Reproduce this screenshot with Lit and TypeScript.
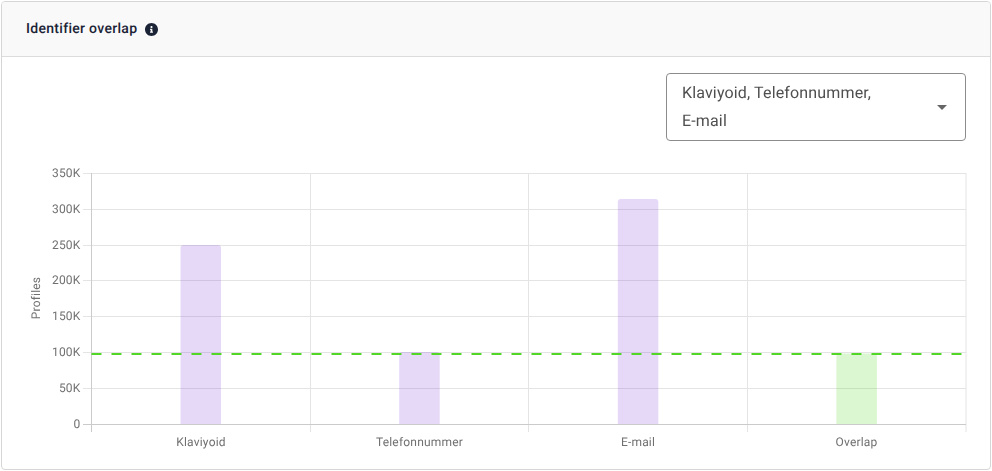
import { LitElement, html, css, svg } from "lit";
import { customElement } from "lit/decorators.js";

const GRID_Y = [173.5, 209.5, 245.5, 280.5, 316.5, 352.5, 388.5, 424.5];
const LABELS_Y = ["350K", "300K", "250K", "200K", "150K", "100K", "50K", "0"];
const GRID_X = [91.5, 310.5, 528.5, 747.5, 966];
const BARS = [
  { name: "Klaviyoid", x: 180.5, top: 245, cx: 201, fill: "rgba(128,64,220,.2)" },
  { name: "Telefonnummer", x: 399.2, top: 352, cx: 419.5, fill: "rgba(128,64,220,.2)" },
  { name: "E-mail", x: 617.8, top: 199, cx: 638, fill: "rgba(128,64,220,.2)" },
  { name: "Overlap", x: 836.4, top: 353.5, cx: 856.5, fill: "rgba(82,215,38,.21)" },
];

@customElement("app-root")
export class AppRoot extends LitElement {
  static styles = css`
    :host { display: block; padding: 1px; font-family: Roboto, "Liberation Sans", sans-serif; }
    .card { width: 990px; height: 469px; box-sizing: border-box; border: 1px solid #d6d6d6; border-radius: 4px; background: #fff; overflow: hidden; }
    .head { height: 55px; box-sizing: border-box; border-bottom: 1px solid #dcdcdc; background: #f9f9f9; display: flex; align-items: center; gap: 8px; padding: 0 0 0 24px; }
    .title { font-size: 14px; font-weight: 500; color: #1b2336; letter-spacing: 0.3px; text-rendering: geometricPrecision; }
    .info { width: 13px; height: 13px; fill: #1b2336; display: block; }
    .controls { display: flex; justify-content: flex-end; padding: 16px 24px 0 0; }
    .select { width: 300px; height: 68px; box-sizing: border-box; border: 1px solid #8c8c8c; border-radius: 4px; display: flex; align-items: center; justify-content: space-between; padding: 0 18px 0 15px; }
    .value { font-size: 16px; line-height: 28px; color: #4f4f4f; width: 200px; letter-spacing: 0.15px; font-weight: 400; text-rendering: geometricPrecision; will-change: transform; }
    .caret { width: 0; height: 0; border-left: 5.5px solid transparent; border-right: 5.5px solid transparent; border-top: 5px solid #666; }
    .chart { display: block; margin-top: 9px; will-change: transform; }
    .chart text { font-family: Roboto, "Liberation Sans", sans-serif; font-size: 12px; fill: #707070; text-rendering: geometricPrecision; letter-spacing: 0.2px; }
    .grid { stroke: #e4e4e4; stroke-width: 1; }
    .axis { stroke: #cbcbcb; stroke-width: 1; }
    .avg { stroke: #52d726; stroke-width: 2; stroke-dasharray: 10 10; }
  `;

  render() {
    return html`<div class="card">
      <div class="head">
        <span class="title">Identifier overlap</span>
        <svg class="info" viewBox="8 8 496 496"><path d="M256 8C119.043 8 8 119.083 8 256c0 136.997 111.043 248 248 248s248-111.003 248-248C504 119.083 392.957 8 256 8zm0 110c23.196 0 42 18.804 42 42s-18.804 42-42 42-42-18.804-42-42 18.804-42 42-42zm56 254c0 6.627-5.373 12-12 12h-88c-6.627 0-12-5.373-12-12v-24c0-6.627 5.373-12 12-12h12v-64h-12c-6.627 0-12-5.373-12-12v-24c0-6.627 5.373-12 12-12h64c6.627 0 12 5.373 12 12v100h12c6.627 0 12 5.373 12 12v24z"/></svg>
      </div>
      <div class="controls">
        <div class="select">
          <div class="value">Klaviyoid, Telefonnummer, E-mail</div>
          <span class="caret"></span>
        </div>
      </div>
      <svg class="chart" width="988" height="320" viewBox="2 150 988 320">
        ${GRID_Y.slice(0, 7).map((y) => svg`<line class="grid" x1="83" x2="966" y1=${y} y2=${y}></line>`)}
        ${GRID_X.slice(1).map((x) => svg`<line class="grid" x1=${x} x2=${x} y1="173" y2="432"></line>`)}
        ${BARS.map((b) => svg`<path fill=${b.fill} d="M${b.x} 424.5V${b.top + 3}a3 3 0 0 1 3-3h34.5a3 3 0 0 1 3 3V424.5z"></path>`)}
        <line class="axis" x1="91.5" x2="91.5" y1="173" y2="432"></line>
        <line class="axis" x1="83" x2="966" y1="424.5" y2="424.5"></line>
        <line class="avg" x1="91.5" x2="966" y1="354" y2="354"></line>
        ${LABELS_Y.map((t, i) => svg`<text x="80.5" y=${GRID_Y[i] + 3.5} text-anchor="end">${t}</text>`)}
        ${BARS.map((b) => svg`<text x=${b.cx} y="445.5" text-anchor="middle">${b.name}</text>`)}
        <text transform="translate(39.5 298) rotate(-90)" text-anchor="middle">Profiles</text>
      </svg>
    </div>`;
  }
}
